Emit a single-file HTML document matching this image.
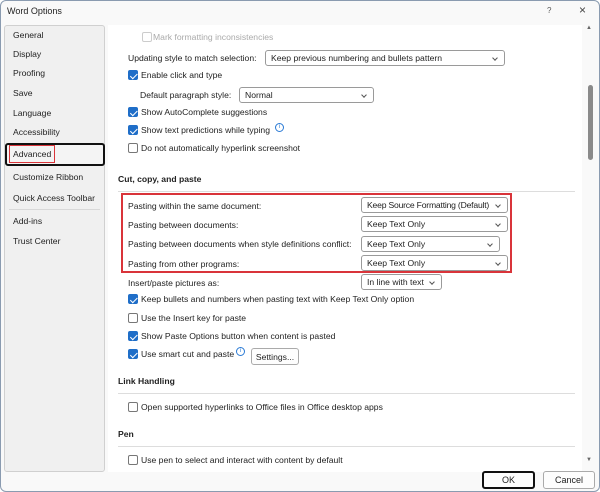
<!DOCTYPE html>
<html><head><style>
*{margin:0;padding:0;box-sizing:border-box}
body{width:600px;height:492px;background:#fff;font-family:"Liberation Sans",sans-serif;font-size:8.6px;color:#222;position:relative;overflow:hidden}
.win{position:absolute;left:0;top:0;width:600px;height:492px;border:1px solid #8a9bb0;border-radius:6px;background:#f9f9f9}
.a{position:absolute;white-space:nowrap}
.nav{position:absolute;left:4px;top:25px;width:101px;height:447px;background:#f0f0f0;border:1px solid #d0d0d0;border-radius:3px}
.content{position:absolute;left:108px;top:25px;width:474px;height:447px;background:#fff}
.cb{position:absolute;width:10px;height:10px;border-radius:2px;border:1px solid #777;background:#fff}
.cb.on{background:#1f6ec8;border-color:#1f6ec8}
.cb.on::after{content:"";position:absolute;left:2.5px;top:0.5px;width:3px;height:5.5px;border:solid #fff;border-width:0 1.5px 1.5px 0;transform:rotate(45deg)}
.dd{position:absolute;height:16px;border:1px solid #9a9a9a;border-radius:3px;background:#fff;padding:2px 0 0 5px;white-space:nowrap;overflow:hidden}
.dd::after{content:"";position:absolute;right:7px;top:5px;width:3px;height:3px;border:solid #555;border-width:0 1px 1px 0;transform:rotate(45deg)}
.b{font-weight:bold}
.ln{position:absolute;height:1px;background:#ddd}
.info{position:absolute;width:9px;height:9px;border:1px solid #2a7ad5;border-radius:50%;color:#2a7ad5;font-size:6px;text-align:center;line-height:7px}
.btn{position:absolute;border:1px solid #aaa;border-radius:3px;background:#fdfdfd;text-align:center}
</style></head><body>
<div class="win"></div>
<div class="a" style="left:7px;top:6px;font-size:9px">Word Options</div>
<div class="a" style="left:547px;top:6px;font-size:8px;color:#555">?</div>
<div class="a" style="left:579px;top:3px;font-size:12px;color:#444">×</div>
<div class="nav"></div>
<div class="a" style="left:13px;top:30px">General</div>
<div class="a" style="left:13px;top:49px">Display</div>
<div class="a" style="left:13px;top:68px">Proofing</div>
<div class="a" style="left:13px;top:88px">Save</div>
<div class="a" style="left:13px;top:108px">Language</div>
<div class="a" style="left:13px;top:127px">Accessibility</div>
<div class="a" style="left:5px;top:143px;width:100px;height:23px;border:2px solid #111;border-radius:3px;background:#f4f4f4"></div>
<div class="a" style="left:9px;top:145px;width:46px;height:18px;border:1.5px solid #d9343a"></div>
<div class="a" style="left:13px;top:149px">Advanced</div>
<div class="a" style="left:13px;top:172px">Customize Ribbon</div>
<div class="a" style="left:13px;top:193px">Quick Access Toolbar</div>
<div class="ln" style="left:9px;top:209px;width:91px;background:#d8d8d8"></div>
<div class="a" style="left:13px;top:216px">Add-ins</div>
<div class="a" style="left:13px;top:236px">Trust Center</div>
<div class="content"></div>
<div class="cb" style="left:142px;top:32px;border-color:#ccc"></div>
<div class="a" style="left:153px;top:32px;color:#aaa">Mark formatting inconsistencies</div>
<div class="a" style="left:128px;top:53px">Updating style to match selection:</div>
<div class="dd" style="left:265px;top:50px;width:240px">Keep previous numbering and bullets pattern</div>
<div class="cb on" style="left:128px;top:70px"></div>
<div class="a" style="left:141px;top:70px">Enable click and type</div>
<div class="a" style="left:140px;top:90px">Default paragraph style:</div>
<div class="dd" style="left:239px;top:87px;width:135px">Normal</div>
<div class="cb on" style="left:128px;top:107px"></div>
<div class="a" style="left:141px;top:107px">Show AutoComplete suggestions</div>
<div class="cb on" style="left:128px;top:125px"></div>
<div class="a" style="left:141px;top:125px">Show text predictions while typing</div>
<div class="info" style="left:275px;top:123px">i</div>
<div class="cb" style="left:128px;top:143px"></div>
<div class="a" style="left:141px;top:143px">Do not automatically hyperlink screenshot</div>
<div class="a b" style="left:118px;top:174px">Cut, copy, and paste</div>
<div class="ln" style="left:118px;top:191px;width:457px"></div>
<div class="a" style="left:121px;top:193px;width:391px;height:80px;border:2px solid #d9343a"></div>
<div class="a" style="left:128px;top:201px">Pasting within the same document:</div>
<div class="dd" style="left:361px;top:197px;width:147px;letter-spacing:-0.2px">Keep Source Formatting (Default)</div>
<div class="a" style="left:128px;top:220px">Pasting between documents:</div>
<div class="dd" style="left:361px;top:216px;width:147px">Keep Text Only</div>
<div class="a" style="left:128px;top:239px">Pasting between documents when style definitions conflict:</div>
<div class="dd" style="left:361px;top:236px;width:139px">Keep Text Only</div>
<div class="a" style="left:128px;top:259px">Pasting from other programs:</div>
<div class="dd" style="left:361px;top:255px;width:147px">Keep Text Only</div>
<div class="a" style="left:128px;top:278px">Insert/paste pictures as:</div>
<div class="dd" style="left:361px;top:274px;width:81px">In line with text</div>
<div class="cb on" style="left:128px;top:294px"></div>
<div class="a" style="left:141px;top:294px">Keep bullets and numbers when pasting text with Keep Text Only option</div>
<div class="cb" style="left:128px;top:313px"></div>
<div class="a" style="left:141px;top:313px">Use the Insert key for paste</div>
<div class="cb on" style="left:128px;top:331px"></div>
<div class="a" style="left:141px;top:331px">Show Paste Options button when content is pasted</div>
<div class="cb on" style="left:128px;top:349px"></div>
<div class="a" style="left:141px;top:349px">Use smart cut and paste</div>
<div class="info" style="left:236px;top:347px">i</div>
<div class="btn" style="left:251px;top:348px;width:48px;height:17px;padding-top:3px">Settings...</div>
<div class="a b" style="left:118px;top:376px">Link Handling</div>
<div class="ln" style="left:118px;top:393px;width:457px"></div>
<div class="cb" style="left:128px;top:402px"></div>
<div class="a" style="left:141px;top:402px">Open supported hyperlinks to Office files in Office desktop apps</div>
<div class="a b" style="left:118px;top:429px">Pen</div>
<div class="ln" style="left:118px;top:446px;width:457px"></div>
<div class="cb" style="left:128px;top:455px"></div>
<div class="a" style="left:141px;top:455px">Use pen to select and interact with content by default</div>
<div class="a" style="left:586px;top:25px;font-size:6px;color:#666">▲</div>
<div class="a" style="left:588px;top:85px;width:5px;height:75px;background:#8a8a8a;border-radius:3px"></div>
<div class="a" style="left:586px;top:457px;font-size:6px;color:#666">▼</div>
<div class="btn" style="left:482px;top:471px;width:53px;height:18px;border:2px solid #111;padding-top:2px;font-size:9px">OK</div>
<div class="btn" style="left:543px;top:471px;width:52px;height:18px;padding-top:3px;font-size:9px">Cancel</div>
</body></html>
